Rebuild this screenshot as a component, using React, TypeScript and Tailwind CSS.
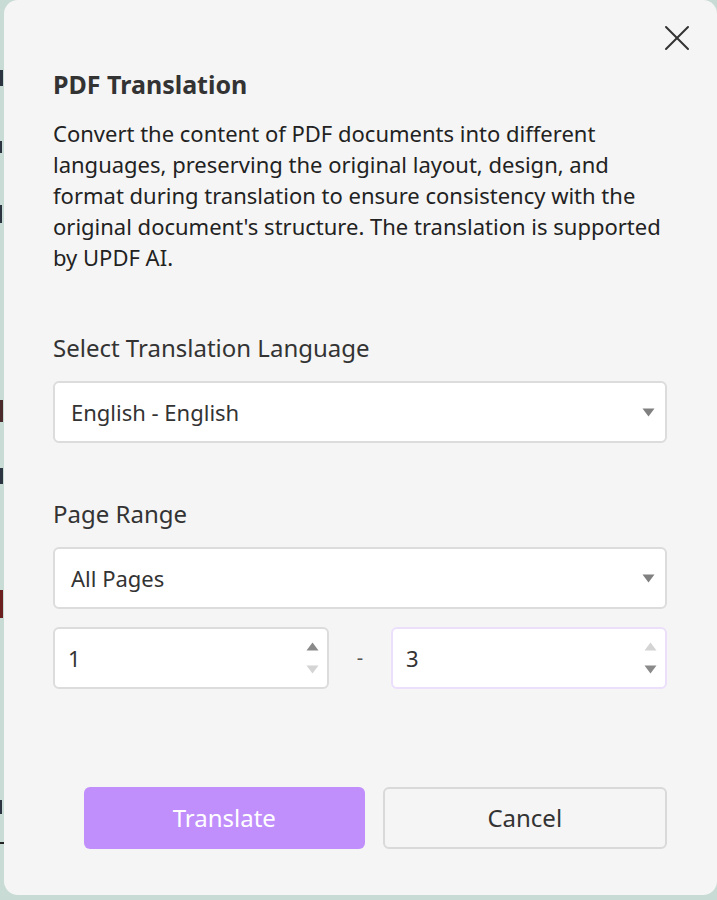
import { X } from "lucide-react"

function Caret({ className }: { className: string }) {
  return (
    <svg width="13" height="9" viewBox="0 0 13 9" className={className}>
      <path d="M0.5 0.5h12L6.5 8.5z" fill="currentColor" />
    </svg>
  )
}

function CaretUp({ className }: { className: string }) {
  return (
    <svg width="13" height="9" viewBox="0 0 13 9" className={className}>
      <path d="M0.5 8.5h12L6.5 0.5z" fill="currentColor" />
    </svg>
  )
}

function SelectBox({ value }: { value: string }) {
  return (
    <div className="flex h-[62px] items-center justify-between rounded-[6px] border-2 border-[#dcdcdc] bg-white pl-[16px] pr-[10px]">
      <span className="text-[22px] text-[#333]">{value}</span>
      <Caret className="text-[#808080]" />
    </div>
  )
}

function NumberBox({ value, upOn, focused }: { value: string; upOn: boolean; focused?: boolean }) {
  return (
    <div
      className={
        "flex h-[62px] flex-1 items-center justify-between rounded-[6px] border-2 bg-white pl-[13px] pr-[8px] " +
        (focused ? "border-[#ebdffc]" : "border-[#dcdcdc]")
      }
    >
      <span className="text-[22px] text-[#333]">{value}</span>
      <div className="flex flex-col gap-[14px]">
        <CaretUp className={upOn ? "text-[#8a8a8a]" : "text-[#d4d4d4]"} />
        <Caret className={upOn ? "text-[#d4d4d4]" : "text-[#8a8a8a]"} />
      </div>
    </div>
  )
}

export default function App() {
  return (
    <div
      className="relative h-[900px] w-[717px] overflow-hidden bg-[#c8dbd5] pl-[4px]"
      style={{ fontFamily: '"Noto Sans", "Open Sans", sans-serif' }}
    >
      {/* bits of the document behind the dialog */}
      <div className="absolute left-0 top-[70px] h-[16px] w-[3px] bg-[#2b3440]" />
      <div className="absolute left-0 top-[141px] h-[12px] w-[2px] bg-[#2b3440]" />
      <div className="absolute left-0 top-[205px] h-[18px] w-[2px] bg-[#2b3440]" />
      <div className="absolute left-0 top-[400px] h-[22px] w-[3px] bg-[#4a2a2a]" />
      <div className="absolute left-0 top-[468px] h-[16px] w-[3px] bg-[#2b3440]" />
      <div className="absolute left-0 top-[590px] h-[28px] w-[3px] bg-[#6b1f1f]" />
      <div className="absolute left-0 top-[800px] h-[14px] w-[2px] bg-[#2b3440]" />
      <div className="absolute left-0 top-[842px] h-[2px] w-[4px] bg-[#222]" />

      <div className="relative h-[895px] w-[713px] rounded-[14px] bg-[#f5f5f5] pl-[49px] pr-[50px] pt-[68px]">
        <button className="absolute right-[18px] top-[16px] text-[#333]">
          <X size={44} strokeWidth={1.1} />
        </button>

        <h1 className="text-[25px] font-bold leading-[32px] text-[#333]">PDF Translation</h1>
        <p className="mt-[18px] whitespace-nowrap text-[22px] leading-[31px] text-[#222]">
          Convert the content of PDF documents into different<br />
          languages, preserving the original layout, design, and<br />
          format during translation to ensure consistency with the<br />
          original document's structure. The translation is supported<br />
          by UPDF AI.
        </p>

        <div className="mt-[60px] text-[24px] leading-[30px] text-[#333]">Select Translation Language</div>
        <div className="mt-[18px]">
          <SelectBox value="English - English" />
        </div>

        <div className="mt-[56px] text-[24px] leading-[30px] text-[#333]">Page Range</div>
        <div className="mt-[18px]">
          <SelectBox value="All Pages" />
        </div>

        <div className="mt-[18px] flex items-center">
          <NumberBox value="1" upOn />
          <div className="w-[62px] text-center text-[20px] text-[#555]">-</div>
          <NumberBox value="3" upOn={false} focused />
        </div>

        <div className="mt-[98px] flex gap-[18px] pl-[31px]">
          <button className="h-[62px] flex-1 rounded-[6px] bg-[#c18ffc] text-[24px] text-white">Translate</button>
          <button className="h-[62px] flex-1 rounded-[6px] border-2 border-[#d9d9d9] bg-[#f5f5f5] text-[24px] text-[#333]">
            Cancel
          </button>
        </div>
      </div>
    </div>
  )
}
